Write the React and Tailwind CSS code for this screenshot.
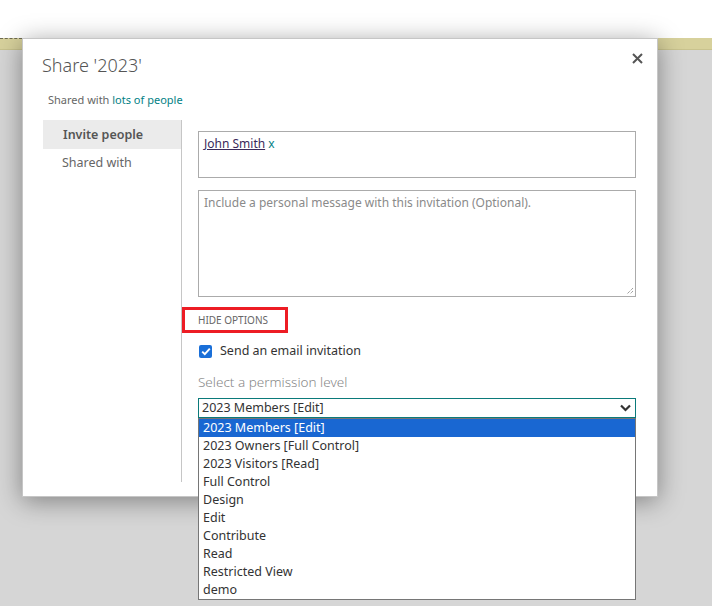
const FONT = { fontFamily: '"Noto Sans", "Open Sans", sans-serif' }

const LEVELS = [
  '2023 Members [Edit]',
  '2023 Owners [Full Control]',
  '2023 Visitors [Read]',
  'Full Control',
  'Design',
  'Edit',
  'Contribute',
  'Read',
  'Restricted View',
  'demo',
]

function Chevron() {
  return (
    <svg width="11" height="8" viewBox="0 0 11 8" className="text-[#333]">
      <path d="M1 1.5 L5.5 6 L10 1.5" stroke="currentColor" strokeWidth="2.2" fill="none" />
    </svg>
  )
}

function CheckBox() {
  return (
    <span className="w-[13px] h-[13px] rounded-[2px] bg-[#1a6fd8] flex items-center justify-center">
      <svg width="10" height="9" viewBox="0 0 10 9">
        <path d="M1.2 4.6 L3.8 7.2 L8.8 1.6" stroke="#fff" strokeWidth="1.9" fill="none" />
      </svg>
    </span>
  )
}

function PermissionSelect() {
  return (
    <div className="relative w-[438px]">
      <div className="h-[20px] border border-[#0b7a7a] flex items-center justify-between pl-[3px] pr-[4px] text-[12.5px] text-[#333]">
        <span>2023 Members [Edit]</span>
        <Chevron />
      </div>
      <ul className="absolute left-0 top-[20px] w-[438px] bg-white border border-[#767676] z-10">
        {LEVELS.map((l, i) => (
          <li
            key={l}
            className={
              'h-[18px] leading-[18px] pl-[4px] text-[12.5px] ' +
              (i === 0 ? 'bg-[#1967d2] text-white' : 'text-[#333]')
            }
          >
            {l}
          </li>
        ))}
      </ul>
    </div>
  )
}

export default function App() {
  return (
    <div className="relative w-[712px] h-[606px] overflow-hidden bg-white" style={FONT}>
      <div className="h-[38px] bg-white" />
      <div className="h-[568px] bg-[#d6d6d6]">
        <div className="h-[12px] bg-[#d7d19c] border-b border-[#c9c38e]">
          <div className="w-[22px] border-t border-dashed border-[#6d6a50]" />
        </div>
      </div>

      {/* dialog */}
      <div className="absolute left-[22px] top-[38px] w-[636px] h-[459px] bg-white border border-[#c6c6c6] shadow-[0_4px_24px_rgba(0,0,0,0.4)]">
        <button className="absolute right-[13px] top-[12px] w-[14px] h-[14px] flex items-center justify-center">
          <svg width="11" height="11" viewBox="0 0 11 11">
            <path d="M1 1 L10 10 M10 1 L1 10" stroke="#555" strokeWidth="2" />
          </svg>
        </button>

        <div className="pl-[19px] pt-[12px] h-[40px] leading-[28px] text-[18px] font-light text-[#555]">
          Share '2023'
        </div>
        <div className="pl-[25px] mt-[10px] h-[22px] leading-[22px] text-[11px] text-[#666]">
          Shared with <span className="text-[#037f85]">lots of people</span>
        </div>

        <div className="flex mt-[9px]">
          <nav className="w-[139px] ml-[20px] h-[362px] border-r border-[#c6c6c6] text-[12.5px]">
            <div className="h-[29px] leading-[29px] pl-[20px] bg-[#ebebeb] font-semibold text-[#555]">
              Invite people
            </div>
            <div className="h-[28px] leading-[28px] pl-[19px] text-[#666]">Shared with</div>
          </nav>

          <div className="pl-[16px] pt-[11px] flex flex-col">
            <div className="w-[438px] h-[47px] border border-[#ababab] px-[5px] pt-[3px] text-[12px]">
              <span className="underline text-[#3a2a5a]">John Smith</span>
              <span className="text-[#037f85]"> x</span>
            </div>

            <div className="relative mt-[12px] w-[438px] h-[107px] border border-[#ababab] px-[5px] pt-[3px] text-[12px] text-[#8a8a8a]">
              Include a personal message with this invitation (Optional).
              <svg className="absolute right-[1px] bottom-[1px]" width="9" height="9" viewBox="0 0 9 9">
                <path d="M8 2 L2 8 M8 5 L5 8" stroke="#777" strokeWidth="1" strokeDasharray="1 1" />
              </svg>
            </div>

            <div className="mt-[10px] -ml-[16px] w-[106px] h-[26px] border-[3px] border-[#ed1c24] flex items-center pl-[13px] text-[10px] uppercase text-[#666]">
              Hide options
            </div>

            <label className="mt-[12px] h-[13px] flex items-center ml-[1px] gap-[8px] text-[12.5px] text-[#333]">
              <CheckBox />
              <span>Send an email invitation</span>
            </label>

            <div className="mt-[14px] h-[20px] leading-[20px] text-[13.5px] font-light text-[#888]">
              Select a permission level
            </div>

            <div className="mt-[6px]">
              <PermissionSelect />
            </div>
          </div>
        </div>
      </div>
    </div>
  )
}
